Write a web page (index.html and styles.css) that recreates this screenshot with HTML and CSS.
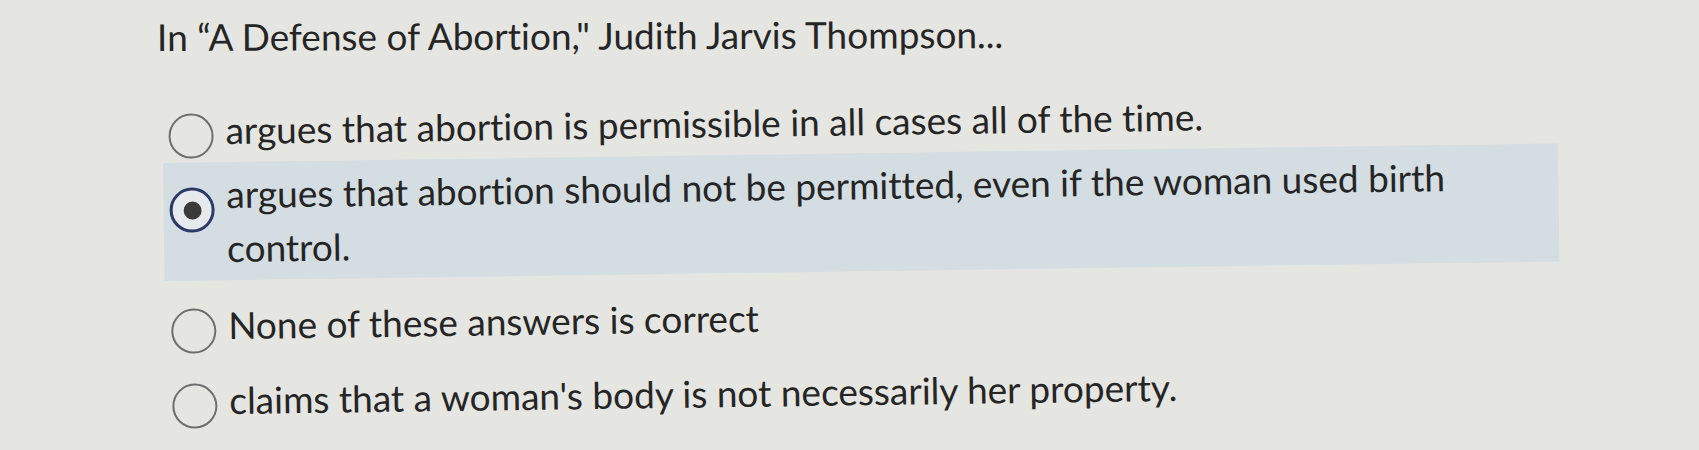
FILE: index.html
```html
<!DOCTYPE html>
<html lang="en">
<head>
<meta charset="utf-8">
<title>Quiz question</title>
<link rel="stylesheet" href="styles.css">
</head>
<body>
<main class="page">
  <h1 class="question">In “A Defense of Abortion," Judith Jarvis Thompson...</h1>
  <div class="options">
    <label class="option">
      <span class="radio"></span>
      <span class="answer">argues that abortion is permissible in all cases all of the time.</span>
    </label>
    <label class="option option-selected">
      <span class="radio radio-checked"></span>
      <span class="answer">argues that abortion should not be permitted, even if the woman used birth control.</span>
    </label>
    <label class="option">
      <span class="radio"></span>
      <span class="answer">None of these answers is correct</span>
    </label>
    <label class="option">
      <span class="radio"></span>
      <span class="answer">claims that a woman's body is not necessarily her property.</span>
    </label>
  </div>
</main>
</body>
</html>
```
FILE: styles.css
```css
html, body {
  margin: 0;
  padding: 0;
}
body {
  background: #e5e5e2;
  color: #252525;
  font-family: Lato, "Open Sans", "Liberation Sans", sans-serif;
  font-variant-ligatures: none;
  width: 1699px;
  height: 450px;
  overflow: hidden;
}
.page {
  display: flex;
  flex-direction: column;
  padding: 15px 0 0 157px;
}
.question {
  margin: 0;
  font-size: 37px;
  line-height: 44px;
  font-weight: 400;
  transform: rotate(-0.2deg);
  transform-origin: 0 50%;
}
.options {
  display: flex;
  flex-direction: column;
  width: 1395px;
  margin: 45px 0 0 6px;
  transform: rotate(-0.8deg);
  transform-origin: 0 62px;
}
.option {
  display: flex;
  align-items: flex-start;
  gap: 12px;
  padding: 0 43px 0 6px;
  font-size: 37px;
  line-height: 54px;
}
.option:nth-child(1) { margin-bottom: 4px; }
.option:nth-child(3) { margin-top: 18px; }
.option:nth-child(4) { margin-top: 20px; }
.option-selected {
  background: #d4dde1;
  padding-top: 5px;
  padding-bottom: 5px;
}
.radio {
  flex: none;
  box-sizing: border-box;
  width: 45px;
  height: 45px;
  margin-top: 10px;
  border: 2.5px solid #6e6e6e;
  border-radius: 50%;
  display: flex;
  align-items: center;
  justify-content: center;
}
.radio-checked {
  margin-top: 20px;
  border: 3.5px solid #2c3a6a;
  background: #e6eaec;
}
.radio-checked::after {
  content: "";
  width: 18px;
  height: 18px;
  border-radius: 50%;
  background: #3a3a3a;
}
.answer {
  flex: 1;
}
```
